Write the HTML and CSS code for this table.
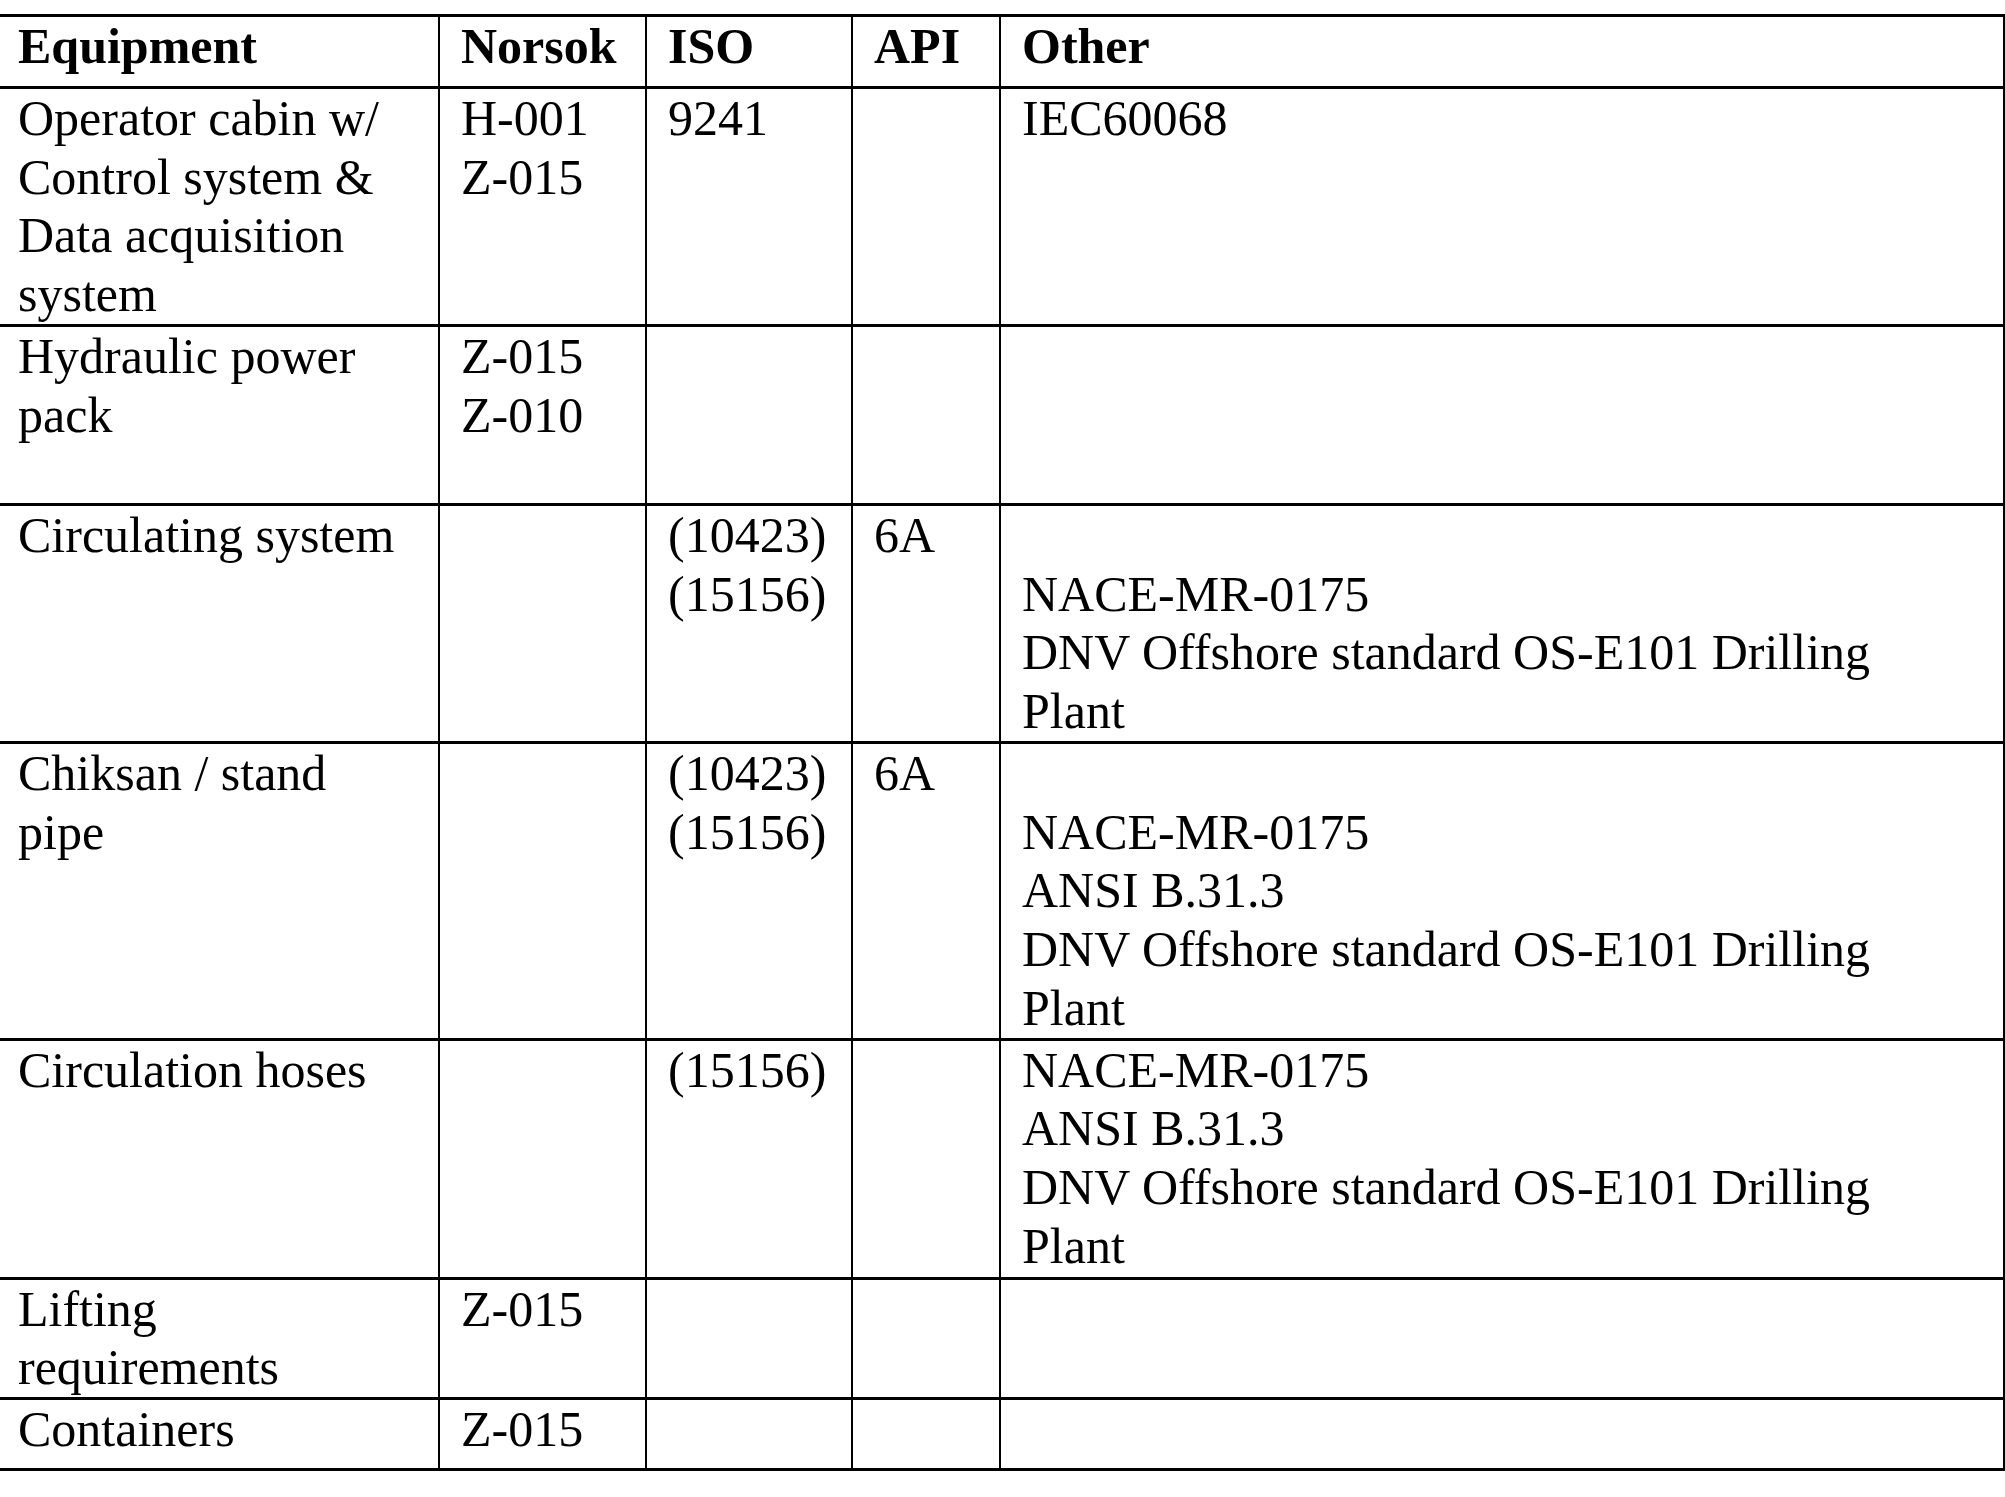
FILE: index.html
```html
<!DOCTYPE html>
<html lang="en">
<head>
<meta charset="utf-8">
<title>Equipment standards</title>
<link rel="stylesheet" href="styles.css">
</head>
<body>
<table class="grid">
  <colgroup>
    <col class="c-equip">
    <col class="c-norsok">
    <col class="c-iso">
    <col class="c-api">
    <col class="c-other">
  </colgroup>
  <thead>
    <tr class="r-head">
      <th>Equipment</th>
      <th>Norsok</th>
      <th>ISO</th>
      <th>API</th>
      <th>Other</th>
    </tr>
  </thead>
  <tbody>
    <tr class="r-4">
      <td>Operator cabin w/<br>Control system &amp;<br>Data acquisition<br>system</td>
      <td>H-001<br>Z-015</td>
      <td>9241</td>
      <td></td>
      <td>IEC60068</td>
    </tr>
    <tr class="r-3">
      <td>Hydraulic power<br>pack</td>
      <td>Z-015<br>Z-010</td>
      <td></td>
      <td></td>
      <td></td>
    </tr>
    <tr class="r-4">
      <td>Circulating system</td>
      <td></td>
      <td>(10423)<br>(15156)</td>
      <td>6A</td>
      <td>&nbsp;<br>NACE-MR-0175<br>DNV Offshore standard OS-E101 Drilling<br>Plant</td>
    </tr>
    <tr class="r-5">
      <td>Chiksan / stand<br>pipe</td>
      <td></td>
      <td>(10423)<br>(15156)</td>
      <td>6A</td>
      <td>&nbsp;<br>NACE-MR-0175<br>ANSI B.31.3<br>DNV Offshore standard OS-E101 Drilling<br>Plant</td>
    </tr>
    <tr class="r-4b">
      <td>Circulation hoses</td>
      <td></td>
      <td>(15156)</td>
      <td></td>
      <td>NACE-MR-0175<br>ANSI B.31.3<br>DNV Offshore standard OS-E101 Drilling<br>Plant</td>
    </tr>
    <tr class="r-2">
      <td>Lifting<br>requirements</td>
      <td>Z-015</td>
      <td></td>
      <td></td>
      <td></td>
    </tr>
    <tr class="r-last">
      <td>Containers</td>
      <td>Z-015</td>
      <td></td>
      <td></td>
      <td></td>
    </tr>
  </tbody>
</table>
</body>
</html>
```

FILE: styles.css
```css
html, body {
  margin: 0;
  padding: 0;
  background: #ffffff;
}

.grid {
  border-collapse: collapse;
  table-layout: fixed;
  width: 2004px;
  margin-top: 14px;
  font-family: "Liberation Serif", "Times New Roman", serif;
  font-size: 50px;
  line-height: 58.7px;
  color: #000000;
}

.c-equip { width: 439px; }
.c-norsok { width: 207px; }
.c-iso { width: 206px; }
.c-api { width: 148px; }
.c-other { width: 1004px; }

.grid th,
.grid td {
  border-top: 3px solid #000000;
  border-bottom: 3px solid #000000;
  border-left: 2px solid #000000;
  border-right: 2px solid #000000;
  padding: 0 20px 0 21px;
  vertical-align: top;
  text-align: left;
  white-space: nowrap;
}

.grid th {
  font-weight: bold;
}

.grid th:first-child,
.grid td:first-child {
  border-left: none;
  padding-left: 18px;
}

.r-head { height: 72px; }
.r-4 { height: 238px; }
.r-3 { height: 179px; }
.r-5 { height: 296px; }
.r-4b { height: 239px; }
.r-2 { height: 120px; }
.r-last { height: 71px; }
```
